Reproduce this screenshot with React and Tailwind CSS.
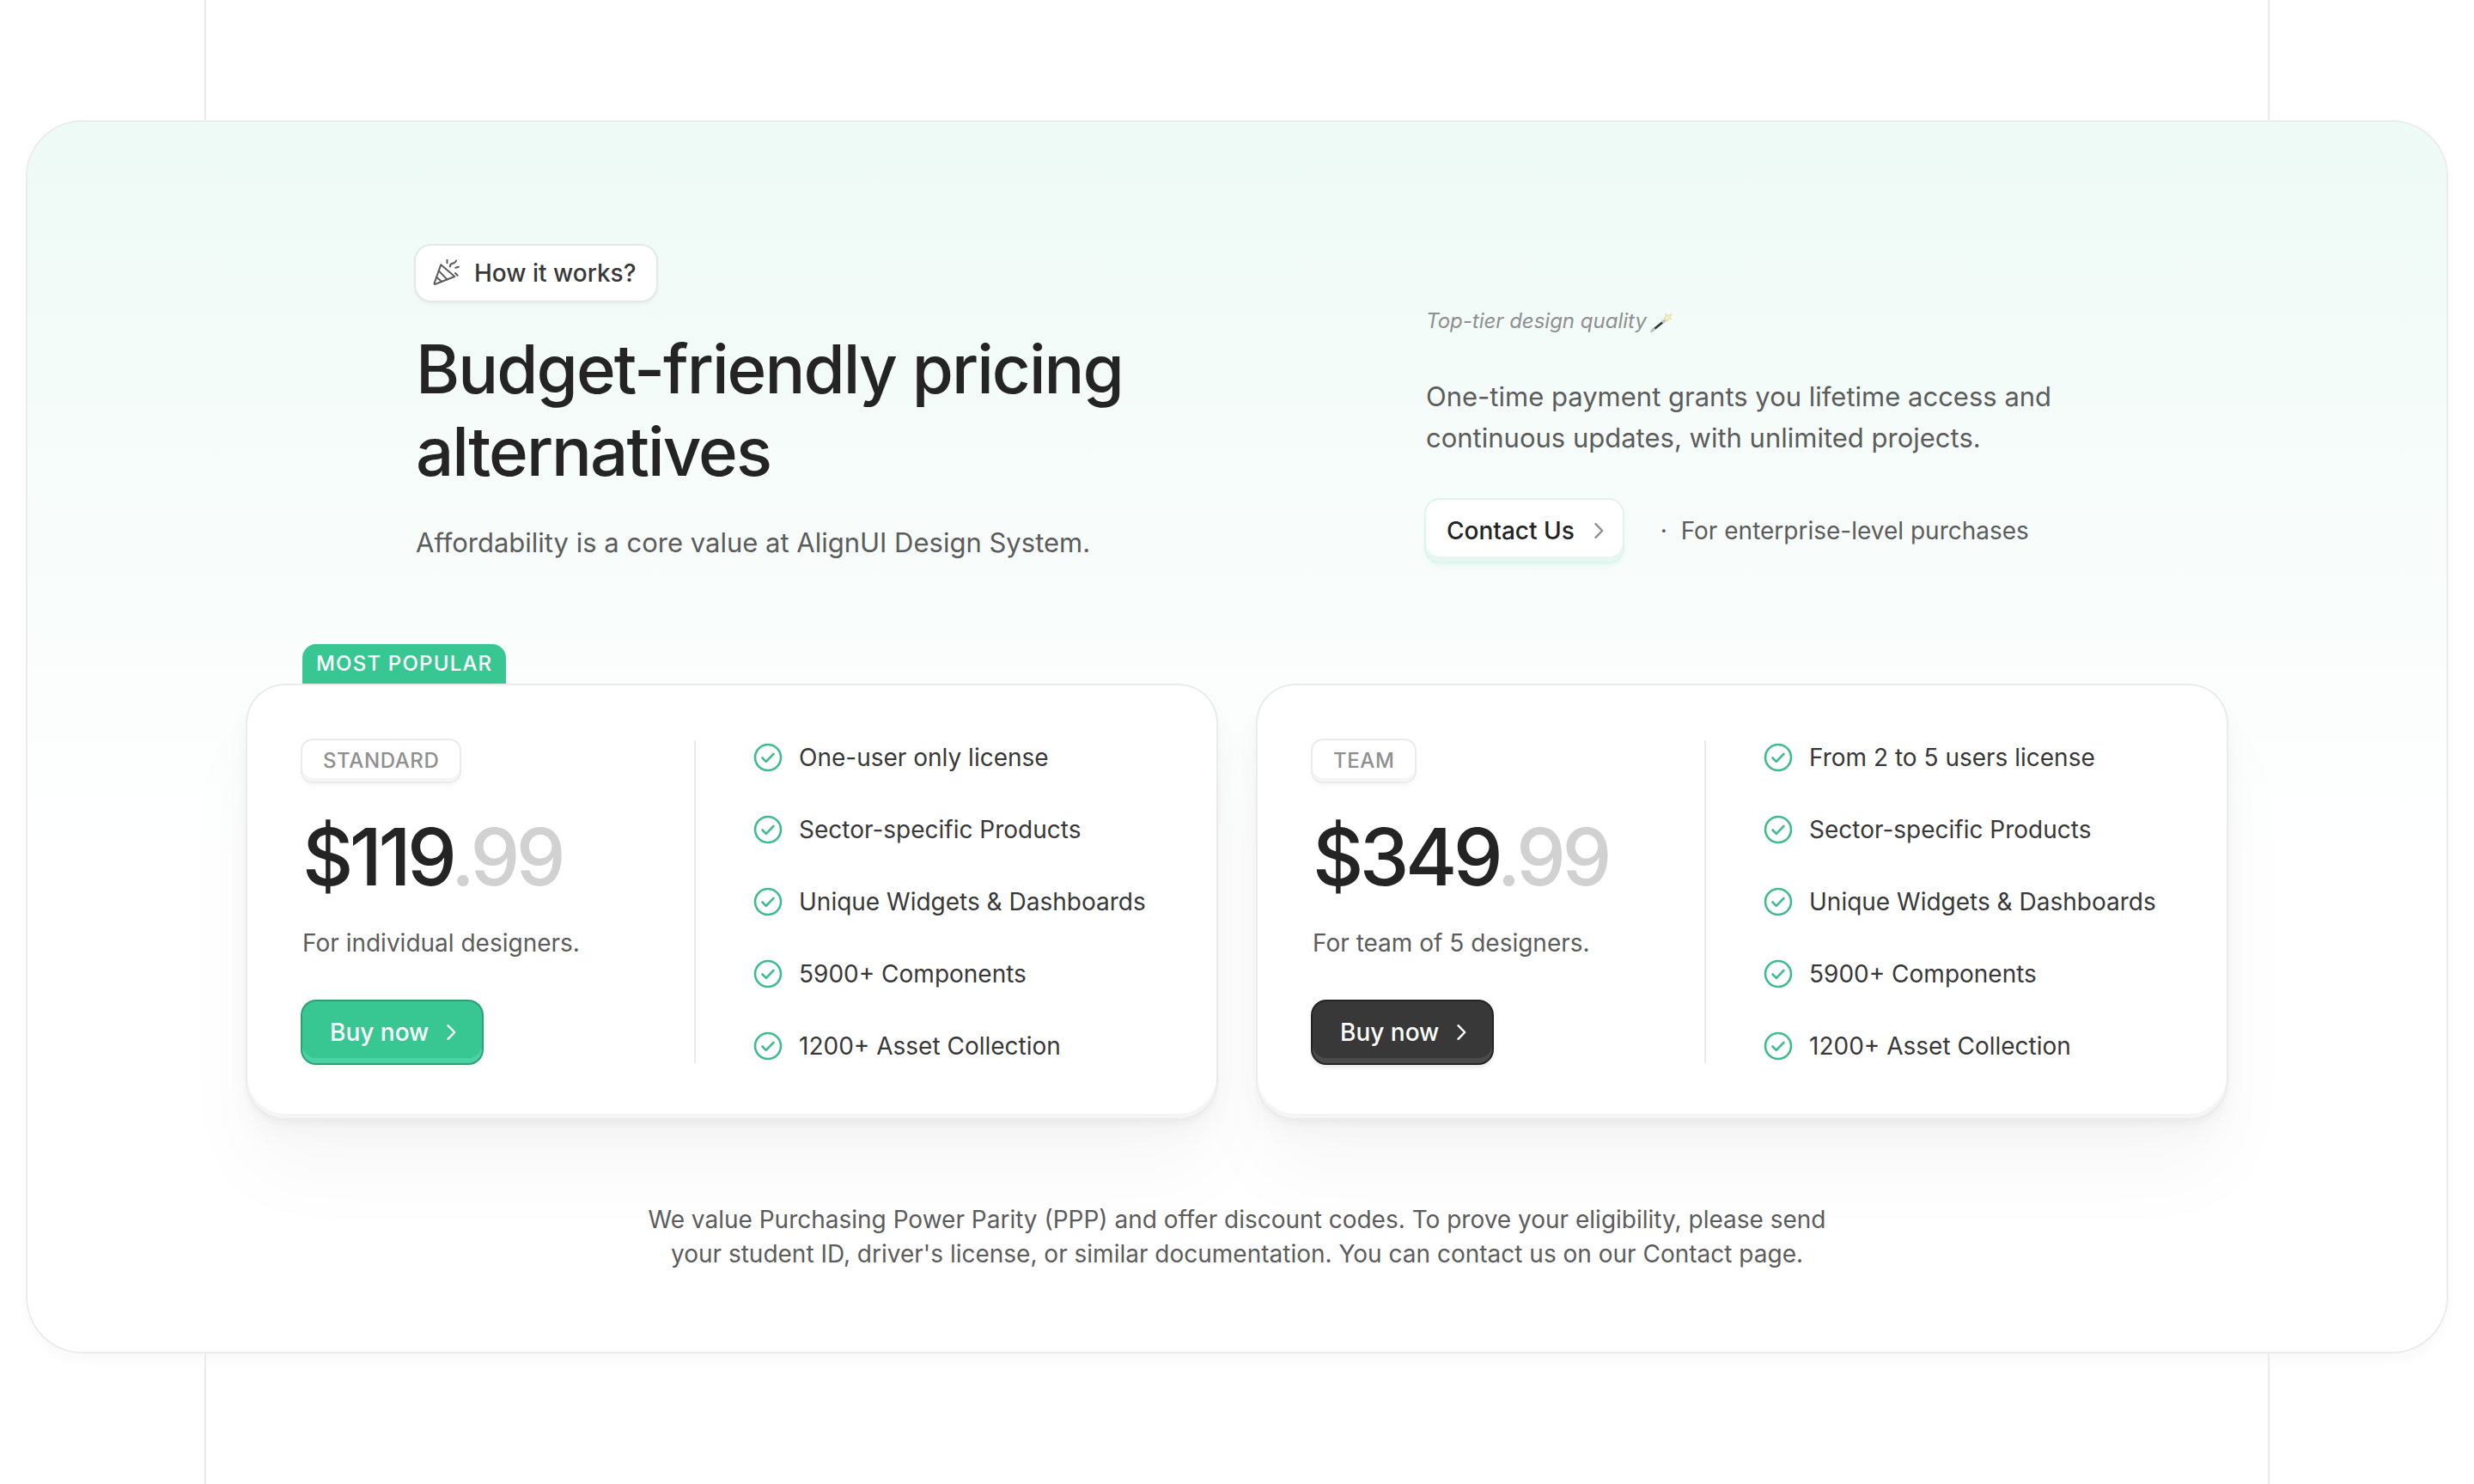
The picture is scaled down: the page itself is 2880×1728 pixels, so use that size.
import React from "react";

const plans = [
  {
    name: "STANDARD",
    popular: true,
    price: "$119",
    cents: ".99",
    note: "For individual designers.",
    button:
      "bg-[#38c793] shadow-[0_0_0_2px_#2d9f75,0_4px_6px_rgba(31,193,107,0.12),inset_0_-6px_0_#4ad3a2]",
    features: [
      "One-user only license",
      "Sector-specific Products",
      "Unique Widgets & Dashboards",
      "5900+ Components",
      "1200+ Asset Collection",
    ],
  },
  {
    name: "TEAM",
    popular: false,
    price: "$349",
    cents: ".99",
    note: "For team of 5 designers.",
    button:
      "bg-[#383838] shadow-[0_0_0_2px_#242424,0_4px_6px_rgba(0,0,0,0.12),inset_0_-6px_0_#4a4a4a]",
    features: [
      "From 2 to 5 users license",
      "Sector-specific Products",
      "Unique Widgets & Dashboards",
      "5900+ Components",
      "1200+ Asset Collection",
    ],
  },
];

function PartyIcon() {
  return (
    <svg
      viewBox="0 0 32 32"
      className="size-8"
      fill="none"
      stroke="#5c5c5c"
      strokeWidth="2"
      strokeLinecap="round"
      strokeLinejoin="round"
      aria-hidden="true"
    >
      <path d="M9.300 6.200 1.600 27.800a.9.9 0 0 0 1.200 1.100L25.300 20z" />
      <path d="M6.800 13.400 16.500 23.400M4.200 20.800 10.300 26" />
      <path d="M16.500.8v3.400M19.800 8.500c0-6 5.200-1.500 7.200-7M26.300 9.800l3.600-1M26 16l2.600 2.800" />
    </svg>
  );
}

function WandIcon() {
  return (
    <svg viewBox="0 0 28 28" className="size-7" fill="none" aria-hidden="true">
      <path d="M3 24.500 16 14" stroke="#333333" strokeWidth="2.600" strokeLinecap="round" />
      <path d="m1.500 25.800 3-2.400M15 14.800l2-1.600" stroke="#c4c4c0" strokeWidth="2.800" strokeLinecap="round" />
      <path d="m18 5 1.800 3.200L25 5.500l-2.200 4 2.200 2-4 .2-1.500 3-1-3.700-2.500-1 2.500-1.500z" fill="#f8f3cf" stroke="#e8dc94" />
    </svg>
  );
}

function ArrowIcon({ className }) {
  return (
    <svg
      viewBox="0 0 40 40"
      className={`size-10 ${className}`}
      fill="none"
      stroke="currentColor"
      strokeWidth="2.400"
      strokeLinecap="round"
      strokeLinejoin="round"
      aria-hidden="true"
    >
      <path d="m16.500 12.200 7.700 7.800-7.700 7.800" />
    </svg>
  );
}

function CheckIcon() {
  return (
    <svg
      viewBox="0 0 40 40"
      className="size-10"
      fill="none"
      stroke="#3fbc8c"
      strokeWidth="2.600"
      strokeLinecap="round"
      strokeLinejoin="round"
      aria-hidden="true"
    >
      <circle cx="20" cy="20" r="15" />
      <path d="m13.500 20.500 4.300 4.400 8.700-9" />
    </svg>
  );
}

function PlanCard({ plan }) {
  return (
    <article className="relative flex flex-1 rounded-[44px] bg-white p-16 shadow-[0_0_0_2px_#ebebeb,0_6px_8px_rgba(0,0,0,0.04),0_16px_32px_rgba(0,0,0,0.03),0_64px_96px_rgba(0,0,0,0.03),inset_0_-5px_0_#f5f5f5]">
      {plan.popular && (
        <p className="absolute bottom-full left-16 mb-0.5 flex h-[46px] items-center rounded-t-2xl bg-[#38c793] px-4 text-2xl font-medium tracking-wider text-white">
          MOST POPULAR
        </p>
      )}
      <div className="flex w-[458px] flex-col items-start border-r-2 border-[#ebebeb]">
        <h2 className="flex h-12 items-center rounded-xl bg-white px-6 text-2xl font-medium tracking-wide text-[#8f8f8f] shadow-[0_0_0_2px_#ebebeb,0_4px_6px_rgba(0,0,0,0.05),inset_0_-4px_0_#f5f5f5]">
          {plan.name}
        </h2>
        <p className="mt-10 text-[92px] leading-24 font-medium tracking-tighter text-[#242424]">
          {plan.price}
          <span className="text-[#d1d1d1]">{plan.cents}</span>
        </p>
        <p className="mt-8 text-[28px] leading-10 text-[#5c5c5c]">{plan.note}</p>
        <button
          type="button"
          className={`mt-12 flex h-18 items-center gap-1.5 rounded-2xl pr-4 pl-8 text-[28px] font-medium text-white ${plan.button}`}
        >
          Buy now
          <ArrowIcon className="text-white" />
        </button>
      </div>
      <ul className="flex flex-col gap-11 pl-16">
        {plan.features.map((feature) => (
          <li key={feature} className="flex h-10 items-center gap-4 text-[28px] text-[#383838]">
            <CheckIcon />
            {feature}
          </li>
        ))}
      </ul>
    </article>
  );
}

export default function App() {
  return (
    <div className="min-h-screen bg-white font-['Inter',sans-serif]">
      <div className="mx-[238px] h-[142px] border-x-2 border-[#ebebeb]" />
      <main className="mx-8 rounded-[64px] bg-linear-to-b from-[#eefaf6] to-white to-60% px-16 pt-36 pb-[94px] shadow-[0_0_0_2px_#ebebeb,0_8px_16px_rgba(0,0,0,0.03)]">
        <div className="mx-auto max-w-[2304px]">
          <header className="grid grid-cols-2 gap-12">
            <div className="pl-[196px]">
              <a
                href="#how-it-works"
                className="flex h-16 w-fit items-center gap-4 rounded-[18px] bg-white pr-6 pl-5 text-[28px] font-medium text-[#383838] shadow-[0_0_0_2px_#e4e9e7,0_4px_6px_rgba(0,0,0,0.06)]"
              >
                <PartyIcon />
                How it works?
              </a>
              <h1 className="mt-8 text-[78px] leading-24 font-medium tracking-tight text-[#242424]">
                Budget-friendly pricing
                <br />
                alternatives
              </h1>
              <p className="mt-[34px] text-[31px] leading-12 text-[#5c5c5c]">
                Affordability is a core value at AlignUI Design System.
              </p>
            </div>
            <div className="pt-18 pl-[196px] text-[#5c5c5c]">
              <p className="flex h-8 items-center gap-1 text-2xl text-[#8f8f8f] italic">
                Top-tier design quality <WandIcon />
              </p>
              <p className="mt-12 max-w-[760px] text-[31px] leading-12">
                One-time payment grants you lifetime access and continuous updates, with unlimited projects.
              </p>
              <div className="mt-12 flex items-center text-[28px]">
                <button
                  type="button"
                  className="flex h-18 items-center gap-2 rounded-2xl bg-white pr-2 pl-6 font-medium text-[#242424] shadow-[0_0_0_2px_#def4ec,0_4px_6px_rgba(56,199,147,0.12),inset_0_-6px_0_#e6f7f1]"
                >
                  Contact Us
                  <ArrowIcon className="text-[#8f8f8f]" />
                </button>
                <p className="ml-11">·&nbsp; For enterprise-level purchases</p>
              </div>
            </div>
          </header>
          <section className="mt-[142px] flex gap-12">
            {plans.map((plan) => (
              <PlanCard key={plan.name} plan={plan} />
            ))}
          </section>
          <p className="relative mx-auto mt-[98px] max-w-[1380px] text-center text-[28px] leading-10 text-[#5c5c5c]">
            We value Purchasing Power Parity (PPP) and offer discount codes. To prove your eligibility, please send your
            student ID, driver's license, or similar documentation. You can contact us on our Contact page.
          </p>
        </div>
      </main>
      <div className="mx-[238px] h-[154px] border-x-2 border-[#ebebeb]" />
    </div>
  );
}
